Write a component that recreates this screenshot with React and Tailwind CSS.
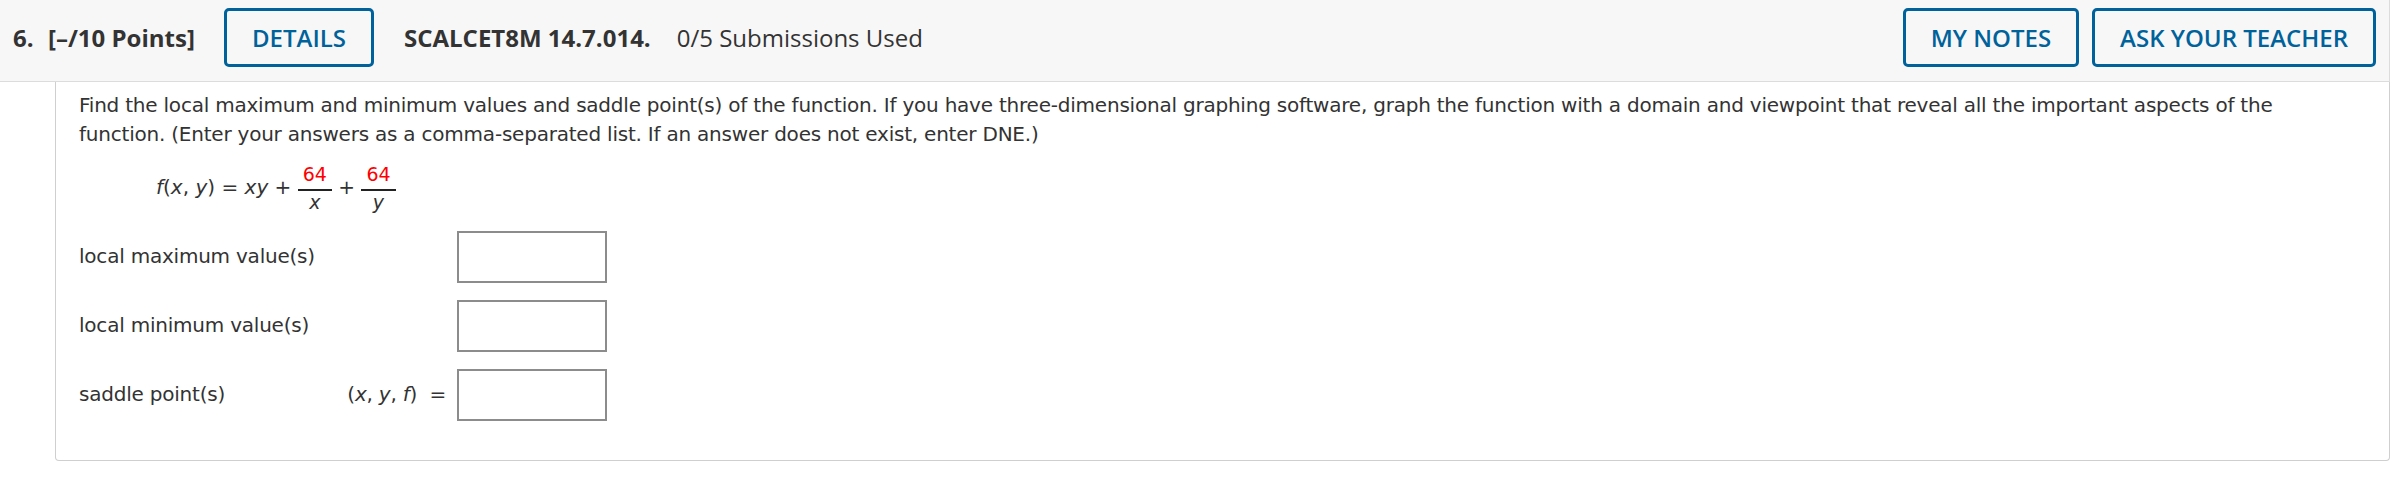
const Btn = ({ children }) => (
  <button className="h-[59px] px-[25px] border-[3px] border-[#00629b] rounded-[5px] text-[#00629b] text-[24px] font-semibold leading-[53px] bg-transparent whitespace-nowrap">
    {children}
  </button>
);

const Frac = ({ num, den }) => (
  <span className="inline-flex flex-col items-stretch text-[19px] tracking-normal">
    <span className="px-[5px] pb-[5px] leading-[20px] text-center text-[#ff0000]">{num}</span>
    <span className="h-[1.5px] bg-[#222]" />
    <span className="pt-[2px] leading-[18px] text-center italic">{den}</span>
  </span>
);

const Row = ({ label, prefix }) => (
  <div className="flex items-center">
    <div className="w-[378px] flex items-center justify-between">
      <span>{label}</span>
      {prefix && <span className="pr-[11px]">{prefix}</span>}
    </div>
    <div className="w-[150px] h-[52px] border-2 border-[#8c8c8c] bg-white" />
  </div>
);

const App = () => {
  return (
    <div className="w-[2390px] bg-white text-[#333]">
      <div className="h-[82px] bg-[#f7f7f7] border-b border-r border-[#dcdcdc] flex items-start pt-[8px] pl-[13px] pr-[13px] font-['Open_Sans',sans-serif] text-[24px] leading-[59px]">
        <span className="w-[35px] font-bold">6.</span>
        <span className="w-[176px] font-bold">[–/10 Points]</span>
        <Btn>DETAILS</Btn>
        <span className="ml-[30px] font-bold">SCALCET8M 14.7.014.</span>
        <span className="ml-[26px]">0/5 Submissions Used</span>
        <div className="ml-auto flex gap-[13px]">
          <Btn>MY NOTES</Btn>
          <Btn>ASK YOUR TEACHER</Btn>
        </div>
      </div>

      <div className="ml-[55px] h-[379px] border-l border-r border-b border-[#cfcfcf] rounded-b-[4px] pt-[9px] pl-[23px] pr-[60px] font-['DejaVu_Sans',Verdana,sans-serif] text-[20px] tracking-[-0.22px] leading-[29px]">
        <p>
          Find the local maximum and minimum values and saddle point(s) of the function. If you have three-dimensional graphing software, graph the function with a domain and viewpoint that reveal all the important aspects of the function. (Enter your answers as a comma-separated list. If an answer does not exist, enter DNE.)
        </p>

        <div className="mt-[15px] ml-[77px] flex items-center leading-normal tracking-normal">
          <span className="whitespace-pre">
            <i>f</i>(<i>x</i>, <i>y</i>) = <i>xy</i> +{' '}
          </span>
          <Frac num="64" den="x" />
          <span className="whitespace-pre"> + </span>
          <Frac num="64" den="y" />
        </div>

        <div className="mt-[20px] flex flex-col gap-[17px]">
          <Row label="local maximum value(s)" />
          <Row label="local minimum value(s)" />
          <Row
            label="saddle point(s)"
            prefix={
              <span className="whitespace-pre">
                (<i>x</i>, <i>y</i>, <i>f</i>)  =
              </span>
            }
          />
        </div>
      </div>
    </div>
  );
};

export default App;
